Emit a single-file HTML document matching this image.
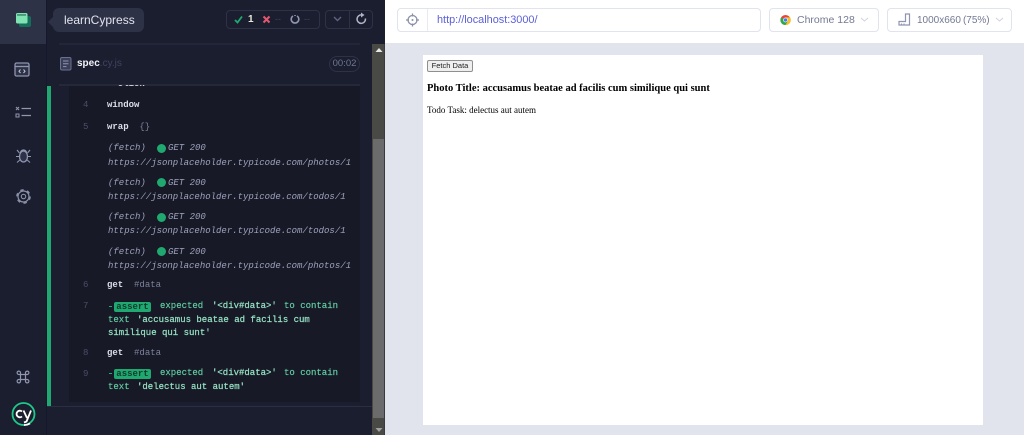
<!DOCTYPE html>
<html><head><meta charset="utf-8"><style>
html,body{margin:0;padding:0;width:1024px;height:435px;overflow:hidden;background:#e1e3ed;font-family:"Liberation Sans",sans-serif}
div,span.a{position:absolute}
svg{position:absolute}
.m{font-family:"Liberation Mono",monospace;font-size:9px;line-height:17px;white-space:pre;color:#d0d2e0}
.n{font-family:"Liberation Mono",monospace;font-size:9px;line-height:17px;color:#4a4f6a;left:83px}
.b{color:#dcdeea;font-weight:bold;left:107px}
.d{color:#7d829c;font-weight:normal}
.f{left:108px;color:#9ea3bd;font-style:italic}
.h{color:#62cfa3;-webkit-text-stroke:.15px}
.s{color:#96e2c3;-webkit-text-stroke:.2px}
.c{width:9px;height:9px;border-radius:50%;background:#1fa971;left:157px}
.tag{left:114px;width:37px;height:10px;background:#1fa971;color:#103a2c;border-radius:2px;font-family:"Liberation Mono",monospace;font-size:9px;line-height:10px;text-align:center;font-weight:bold}
.dash{left:109px;width:3px;height:1px;background:#1fa971}
.box{background:#fff;border:1px solid #e1e3ed;border-radius:4px;height:24px;top:8px;box-sizing:border-box}
.t{white-space:nowrap}
</style></head><body>
<div style="left:0;top:0;width:385px;height:435px;background:#1b1e2e"></div>
<div style="left:0;top:0;width:47px;height:435px;background:#1b1e2e;border-right:1px solid #15172a;box-sizing:border-box"></div>
<div style="left:0;top:0;width:46px;height:44px;background:#2e3247"></div>
<svg style="left:15px;top:12px" width="18" height="16" viewBox="0 0 18 16"><rect x="4" y="4" width="12" height="11" rx="2" fill="#14705a"/><rect x="1" y="1" width="11.500" height="10.500" rx="1.500" fill="#7fe3b4"/><rect x="2" y="2.300" width="9" height="1.300" fill="#2e7a5d"/></svg>
<svg style="left:47px;top:15px" width="8" height="14" viewBox="0 0 8 14"><path d="M1 7L7 1V13Z" fill="#2e3247"/></svg>
<div style="left:53px;top:8px;width:91px;height:24px;background:#2e3247;border-radius:6px"></div>
<div class="t" style="left:64px;top:12px;font-size:12px;line-height:16px;color:#e1e3ed">learnCypress</div>

<div style="left:59px;top:43px;width:301px;height:2px;background:#232638"></div>
<div style="left:59px;top:84px;width:301px;height:2px;background:#252839"></div>
<svg style="left:60px;top:57px" width="12" height="14" viewBox="0 0 12 14"><rect x=".5" y=".5" width="10.500" height="12.500" rx="1.500" fill="#3a3e57" stroke="#6b7090"/><path d="M3 4H8.500M3 6.800H8.500M3 9.600H6.500" stroke="#9095b0" fill="none"/></svg>
<div class="t" style="left:77px;top:57px;font-size:10px;line-height:14px;font-weight:bold;color:#f3f4fa">spec<span style="font-weight:normal;color:#3f4360">.cy.js</span></div>
<div class="t" style="left:329px;top:56px;width:31px;height:16px;border:1px solid #2e3247;border-radius:9px;box-sizing:border-box;font-size:9.500px;line-height:14px;text-align:center;color:#717694;background:#1b1e2e">00:02</div>

<div style="left:226px;top:10px;width:94px;height:19px;border:1px solid #2e3247;border-radius:4px;box-sizing:border-box"></div>
<svg style="left:234px;top:15px" width="9" height="9" viewBox="0 0 9 9"><path d="M1 5L3.500 7.500L8 1.500" stroke="#1fa971" stroke-width="1.800" fill="none"/></svg>
<div class="t" style="left:248px;top:13px;font-size:10px;line-height:13px;font-weight:bold;color:#e8e9d8">1</div>
<svg style="left:262px;top:15px" width="9" height="9" viewBox="0 0 9 9"><path d="M1.500 1.500L7.500 7.500M7.500 1.500L1.500 7.500" stroke="#e45770" stroke-width="2" fill="none"/></svg>
<div class="t" style="left:275px;top:13px;font-size:9px;line-height:13px;color:#3f4360">--</div>
<svg style="left:290px;top:14px" width="10" height="11" viewBox="0 0 10 11"><path d="M3 2A3.800 3.800 0 1 0 7 2M5 1V2" stroke="#9095b0" stroke-width="1.600" fill="none"/></svg>
<div class="t" style="left:304px;top:13px;font-size:9px;line-height:13px;color:#3f4360">--</div>
<div style="left:325px;top:10px;width:48px;height:19px;border:1px solid #2e3247;border-radius:4px;box-sizing:border-box"></div>
<div style="left:349px;top:10px;width:1px;height:19px;background:#2e3247"></div>
<svg style="left:333px;top:16px" width="9" height="6" viewBox="0 0 9 6"><path d="M1 1L4.500 4.500L8 1" stroke="#5f6483" stroke-width="1.400" fill="none"/></svg>
<svg style="left:355px;top:12px" width="12" height="13" viewBox="0 0 12 13"><path d="M7 3A4.200 4.200 0 1 0 10.400 6.500" stroke="#b0b3c8" stroke-width="1.500" fill="none"/><path d="M6 .5L9.500 3L6 5.500Z" fill="#b0b3c8"/></svg>

<div style="left:47px;top:86px;width:4px;height:320px;background:#1fa971"></div>
<div style="left:47px;top:406px;width:325px;height:1px;background:#2a2e42"></div>
<div style="left:69px;top:86px;width:291px;height:316px;background:#171926;overflow:hidden"></div>
<div class="m b" style="top:76px;color:#d0d2e0;clip-path:inset(9px 0 0 0)">  click</div>

<div class="n" style="top:97px">4</div><div class="m b" style="top:97px">window</div>
<div class="n" style="top:119px">5</div><div class="m b" style="top:119px">wrap  <span class="d">{}</span></div>
<div class="m f" style="top:140px">(fetch)</div><div class="c" style="top:144px"></div><div class="m f" style="left:168px;top:140px">GET 200</div>
<div class="m f" style="top:155px">https://jsonplaceholder.typicode.com/photos/1</div>
<div class="m f" style="top:175px">(fetch)</div><div class="c" style="top:178px"></div><div class="m f" style="left:168px;top:175px">GET 200</div>
<div class="m f" style="top:189px">https://jsonplaceholder.typicode.com/todos/1</div>
<div class="m f" style="top:209px">(fetch)</div><div class="c" style="top:213px"></div><div class="m f" style="left:168px;top:209px">GET 200</div>
<div class="m f" style="top:223px">https://jsonplaceholder.typicode.com/todos/1</div>
<div class="m f" style="top:244px">(fetch)</div><div class="c" style="top:247px"></div><div class="m f" style="left:168px;top:244px">GET 200</div>
<div class="m f" style="top:258px">https://jsonplaceholder.typicode.com/photos/1</div>
<div class="n" style="top:277px">6</div><div class="m b" style="top:277px">get  <span class="d">#data</span></div>

<div class="n" style="top:298px">7</div>
<div class="dash" style="top:306px"></div><div class="tag" style="top:302px">assert</div>
<div class="m h" style="left:160px;top:298px">expected</div>
<div class="m s" style="left:212px;top:298px">'&lt;div#data&gt;'</div>
<div class="m h" style="left:284px;top:298px">to contain</div>
<div class="m h" style="left:108px;top:312px">text</div>
<div class="m s" style="left:137px;top:312px">'accusamus beatae ad facilis cum</div>
<div class="m s" style="left:108px;top:325px">similique qui sunt'</div>

<div class="n" style="top:345px">8</div><div class="m b" style="top:345px">get  <span class="d">#data</span></div>

<div class="n" style="top:366px">9</div>
<div class="dash" style="top:373px"></div><div class="tag" style="top:369px">assert</div>
<div class="m h" style="left:160px;top:365px">expected</div>
<div class="m s" style="left:212px;top:365px">'&lt;div#data&gt;'</div>
<div class="m h" style="left:284px;top:365px">to contain</div>
<div class="m h" style="left:108px;top:379px">text</div>
<div class="m s" style="left:137px;top:379px">'delectus aut autem'</div>

<svg style="left:14px;top:62px" width="18" height="16" viewBox="0 0 18 16"><rect x="1" y="1" width="14" height="13" rx="1.500" fill="#2e3247" stroke="#9095b0" stroke-width="1.300" /><path d="M1 4.500H15" stroke="#9095b0" stroke-width="1.300"/><path d="M6.500 7.500L5 9.200L6.500 11M9.500 7.500L11 9.200L9.500 11" stroke="#c5c7d8" fill="none"/></svg>
<svg style="left:15px;top:105px" width="17" height="14" viewBox="0 0 17 14"><path d="M1 2L4 5M4 2L1 5" stroke="#9095b0" stroke-width="1.100"/><rect x="1" y="9" width="3" height="3" fill="none" stroke="#9095b0"/><path d="M6.500 3.500H16M6.500 10.500H16" stroke="#9095b0" stroke-width="1.200"/></svg>
<svg style="left:15px;top:147px" width="17" height="17" viewBox="0 0 17 17"><ellipse cx="8.500" cy="9.500" rx="4" ry="5.500" fill="#2e3247" stroke="#9095b0" stroke-width="1.300"/><path d="M5.500 6A3 3 0 0 1 11.500 6" fill="none" stroke="#9095b0" stroke-width="1.300"/><path d="M2 3L4.500 6M15 3L12.500 6M1 9.500H4.500M16 9.500H12.500M2 15.500L4.800 13M15 15.500L12.200 13" stroke="#9095b0" stroke-width="1.100" fill="none"/></svg>
<svg style="left:15px;top:188px" width="17" height="17" viewBox="0 0 17 17"><circle cx="8.500" cy="8.500" r="5.500" fill="none" stroke="#8a8fa8" stroke-width="1.200"/><circle cx="8.500" cy="8.500" r="2.200" fill="none" stroke="#8a8fa8" stroke-width="1.100"/><circle cx="8.500" cy="8.500" r="6.600" fill="none" stroke="#8a8fa8" stroke-width="1.500" stroke-dasharray="3.400 3.510"/></svg>
<svg style="left:16px;top:370px" width="14" height="14" viewBox="0 0 14 14"><path d="M4.500 4.500H9.500V9.500H4.500ZM4.500 4.500H3A1.700 1.700 0 1 1 4.500 3ZM9.500 4.500V3A1.700 1.700 0 1 1 11 4.500ZM9.500 9.500H11A1.700 1.700 0 1 1 9.500 11ZM4.500 9.500V11A1.700 1.700 0 1 1 3 9.500Z" fill="none" stroke="#9095b0" stroke-width="1.200"/></svg>
<svg style="left:11px;top:401px" width="26" height="26" viewBox="0 0 26 26"><circle cx="12.500" cy="13" r="11" fill="none" stroke="#1fc98a" stroke-width="1.800"/><path d="M19 22.500A11 11 0 0 1 13 24" stroke="#fff" stroke-width="1.800" fill="none"/><path d="M11 10.500A3.300 3.300 0 1 0 11 15.500" fill="none" stroke="#fff" stroke-width="1.800"/><path d="M12.500 9.500L16 17M20 9.500L15.500 20.500L13 21.500" fill="none" stroke="#fff" stroke-width="1.800"/></svg>

<div style="left:372px;top:44px;width:13px;height:391px;background:#494946"></div>
<div style="left:384px;top:44px;width:1px;height:391px;background:#3a3a3a"></div>
<div style="left:373px;top:139px;width:11px;height:279px;background:#6b6b6b"></div>
<svg style="left:375px;top:47px" width="8" height="6"><path d="M4 1L7.500 5H.5Z" fill="#e8e8e8"/></svg>
<svg style="left:375px;top:428px" width="8" height="5"><path d="M.5 0H7.500L4 4Z" fill="#a0a0a0"/></svg>

<div style="left:385px;top:0;width:639px;height:44px;background:#fff;border-bottom:1px solid #e1e3ed;box-sizing:border-box"></div>
<div class="box" style="left:397px;width:364px"></div>
<div style="left:427px;top:9px;width:1px;height:22px;background:#e9eaf1"></div>
<svg style="left:406px;top:13px" width="13" height="14" viewBox="0 0 13 14"><circle cx="6.500" cy="7" r="4.500" fill="none" stroke="#8a8fa8" stroke-width="1.300"/><circle cx="6.500" cy="7" r="1" fill="#8a8fa8"/><path d="M6.500 .5V3.500M6.500 10.500V13.500M0 7H3M10 7H13" stroke="#8a8fa8" stroke-width="1.300"/></svg>
<div class="t" style="left:437px;top:13px;font-size:10.900px;line-height:14px;color:#5a5fd8">http://localhost:3000/</div>

<div class="box" style="left:769px;width:110px"></div>
<svg style="left:780px;top:14px" width="11" height="12" viewBox="0 0 12 12"><circle cx="6" cy="6" r="5.500" fill="#e8463a"/><path d="M6 6L1.200 3.200A5.500 5.500 0 0 0 6 11.500L8.800 6.500Z" fill="#2fa84f"/><path d="M6 3.200H11A5.500 5.500 0 0 1 6 11.500L8.800 6.500Z" fill="#f6c028"/><circle cx="6" cy="6" r="2.600" fill="#fff"/><circle cx="6" cy="6" r="1.900" fill="#3f7fe8"/></svg>
<div class="t" style="left:797px;top:13px;font-size:10.500px;line-height:14px;color:#747994">Chrome 128</div>
<svg style="left:860px;top:17px" width="9" height="6"><path d="M1 1L4.500 4L8 1" stroke="#d0d2e0" fill="none"/></svg>
<div class="box" style="left:887px;width:125px"></div>
<svg style="left:898px;top:13px" width="13" height="13" viewBox="0 0 13 13"><path d="M1 12V8.500H7.500V1H11.500V12Z" fill="none" stroke="#9095b0" stroke-width="1.200"/><path d="M3.500 12V10.500M6 12V10.500" stroke="#9095b0"/></svg>
<div class="t" style="left:917px;top:14px;font-size:10px;line-height:14px;color:#747994">1000x660<span style="margin-left:2px">(75%)</span></div>
<svg style="left:995px;top:17px" width="9" height="6"><path d="M1 1L4.500 4L8 1" stroke="#d0d2e0" fill="none"/></svg>

<div style="left:423px;top:55px;width:560px;height:370px;background:#fff"></div>
<div class="t" style="left:427px;top:60px;width:46px;height:12px;background:#efefef;border:1px solid #8f8f8f;border-radius:2px;box-sizing:border-box;font-size:7.500px;line-height:10px;text-align:center;color:#222">Fetch Data</div>
<div class="t" style="left:427px;top:82px;font-family:'Liberation Serif',serif;font-size:10.500px;line-height:14px;font-weight:bold;color:#000">Photo Title: accusamus beatae ad facilis cum similique qui sunt</div>
<div class="t" style="left:427px;top:104px;font-family:'Liberation Serif',serif;font-size:9px;line-height:13px;color:#000">Todo Task: delectus aut autem</div>
</body></html>
